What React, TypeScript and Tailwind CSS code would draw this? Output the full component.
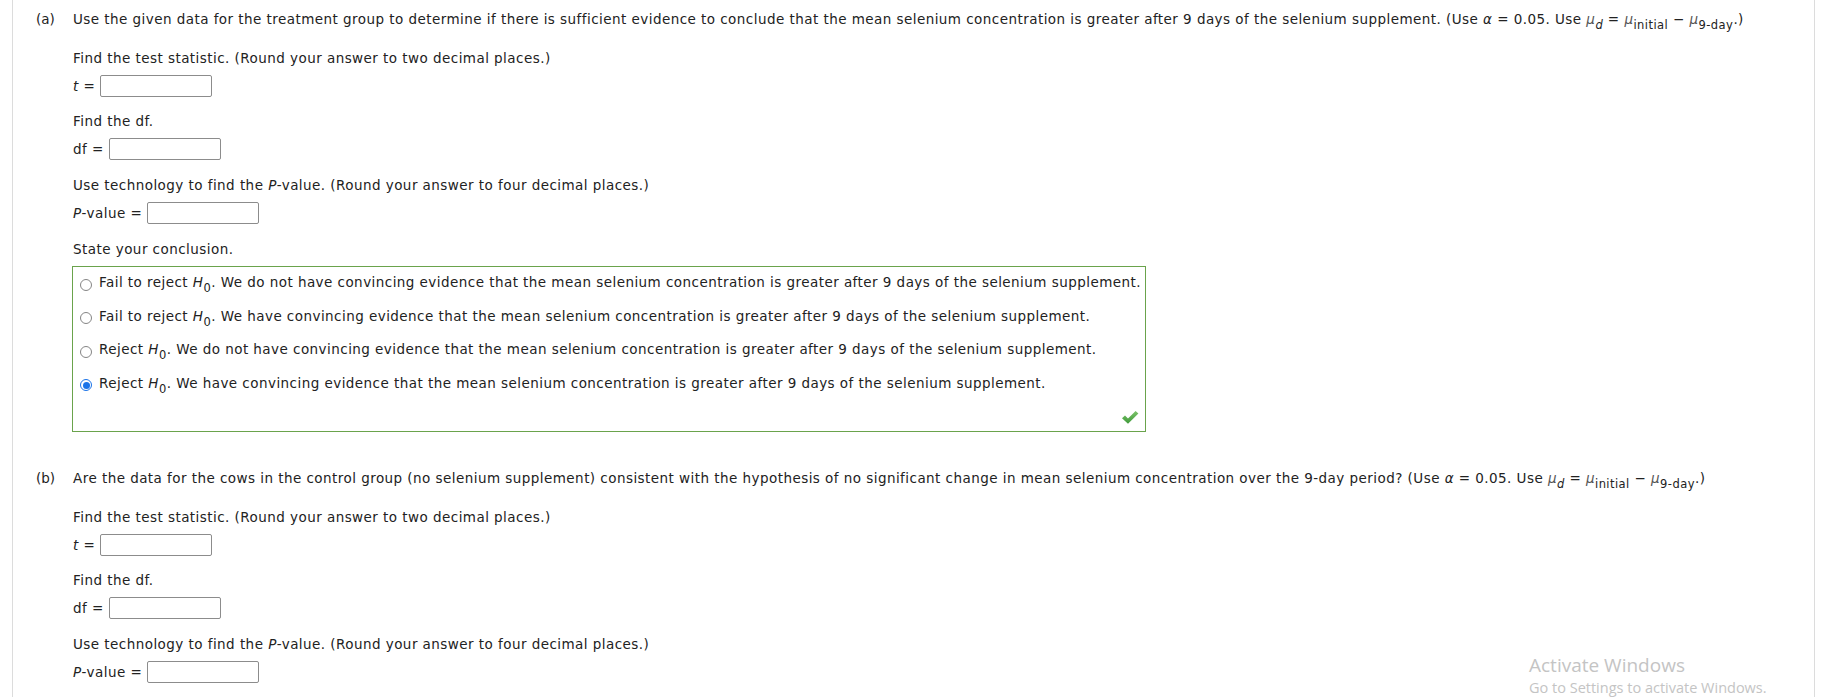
import type { ReactNode } from "react";

function Box() {
  return <span className="inline-block h-[22px] w-[112px] rounded-[2px] border border-[#8c8c8c] bg-white" />;
}

function Sub({ children, italic }: { children: ReactNode; italic?: boolean }) {
  return <span className={`align-[-5px] text-[11.5px] ${italic ? "italic" : ""}`}>{children}</span>;
}

function H0() {
  return (
    <>
      <i>H</i>
      <Sub>0</Sub>
    </>
  );
}

function Mu() {
  return <i className="text-[#555]">μ</i>;
}

function UseAlpha() {
  return (
    <>
      {" "}(Use <i>α</i> = 0.05. Use <Mu />
      <Sub italic>d</Sub> = <Mu />
      <Sub>initial</Sub> − <Mu />
      <Sub>9-day</Sub>.)
    </>
  );
}

function Radio({ checked }: { checked?: boolean }) {
  return checked ? (
    <span className="flex h-[12px] w-[12px] shrink-0 items-center justify-center rounded-full border-[1.5px] border-[#1a73e8] bg-white">
      <span className="h-[7px] w-[7px] rounded-full bg-[#1a73e8]" />
    </span>
  ) : (
    <span className="h-[12px] w-[12px] shrink-0 rounded-full border border-[#858585] bg-white" />
  );
}

function Check() {
  return (
    <svg width="18" height="15" viewBox="0 0 18 15">
      <defs>
        <linearGradient id="ck" x1="0" y1="0" x2="0" y2="1">
          <stop offset="0" stopColor="#7cc36a" />
          <stop offset="1" stopColor="#3f9a3a" />
        </linearGradient>
      </defs>
      <path d="M1 8.2 L4 5.6 L7 8.4 L14.6 1 L17.4 3.6 L7 13.8 Z" fill="url(#ck)" />
    </svg>
  );
}

const options = [
  { lead: "Fail to reject", rest: "We do not have convincing evidence that the mean selenium concentration is greater after 9 days of the selenium supplement." },
  { lead: "Fail to reject", rest: "We have convincing evidence that the mean selenium concentration is greater after 9 days of the selenium supplement." },
  { lead: "Reject", rest: "We do not have convincing evidence that the mean selenium concentration is greater after 9 days of the selenium supplement." },
  { lead: "Reject", rest: "We have convincing evidence that the mean selenium concentration is greater after 9 days of the selenium supplement.", checked: true },
];

function Part({ letter, question, children }: { letter: string; question: ReactNode; children?: ReactNode }) {
  return (
    <div className="flex">
      <div className="w-[37px] shrink-0 leading-[20px] tracking-normal">({letter})</div>
      <div className="flex-1">
        <p className="whitespace-nowrap leading-[20px]">{question}</p>
        <p className="mt-[13px] leading-[20px]">Find the test statistic. (Round your answer to two decimal places.)</p>
        <div className="mt-[7px] flex h-[22px] items-center gap-[5px]">
          <span>
            <i>t</i> =
          </span>
          <Box />
        </div>
        <p className="mt-[14px] leading-[20px]">Find the df.</p>
        <div className="mt-[7px] flex h-[22px] items-center gap-[5px]">
          <span>df =</span>
          <Box />
        </div>
        <p className="mt-[15px] leading-[20px]">
          Use technology to find the <i>P</i>-value. (Round your answer to four decimal places.)
        </p>
        <div className="mt-[7px] flex h-[22px] items-center gap-[5px]">
          <span>
            <i>P</i>-value =
          </span>
          <Box />
        </div>
        {children}
      </div>
    </div>
  );
}

export default function App() {
  return (
    <div className="relative h-[697px] w-[1828px] overflow-hidden bg-white font-['DejaVu_Sans',Verdana,sans-serif] text-[13.5px] tracking-[0.45px] text-[#222]">
      <div className="ml-[12px] h-full w-[1803px] border-x border-[#dcdcdc] pl-[23px] pt-[9px]">
        <Part
          letter="a"
          question={
            <>
              Use the given data for the treatment group to determine if there is sufficient evidence to conclude that the mean selenium concentration is greater after 9 days of the selenium supplement.
              <UseAlpha />
            </>
          }
        >
          <p className="mt-[15px] leading-[20px]">State your conclusion.</p>
          <div className="relative -ml-[1px] mt-[7px] h-[166px] w-[1074px] border border-[#6aa34c] pt-[1px]">
            {options.map((o, i) => (
              <div key={i} className="flex h-[33.5px] items-center gap-[7px] pl-[7px]">
                <Radio checked={o.checked} />
                <span className="whitespace-nowrap">
                  {o.lead} <H0 />. {o.rest}
                </span>
              </div>
            ))}
            <div className="absolute bottom-[6px] right-[6px]">
              <Check />
            </div>
          </div>
        </Part>
        <div className="mt-[36px]">
          <Part
            letter="b"
            question={
              <>
                Are the data for the cows in the control group (no selenium supplement) consistent with the hypothesis of no significant change in mean selenium concentration over the 9-day period?
                <UseAlpha />
              </>
            }
          />
        </div>
      </div>
      <div className="absolute left-[1529px] top-[653px] font-['Open_Sans',sans-serif] tracking-normal text-[#c4c4c4]">
        <div className="text-[19px] leading-[25px]">Activate Windows</div>
        <div className="text-[14.5px] leading-[19px]">Go to Settings to activate Windows.</div>
      </div>
    </div>
  );
}
